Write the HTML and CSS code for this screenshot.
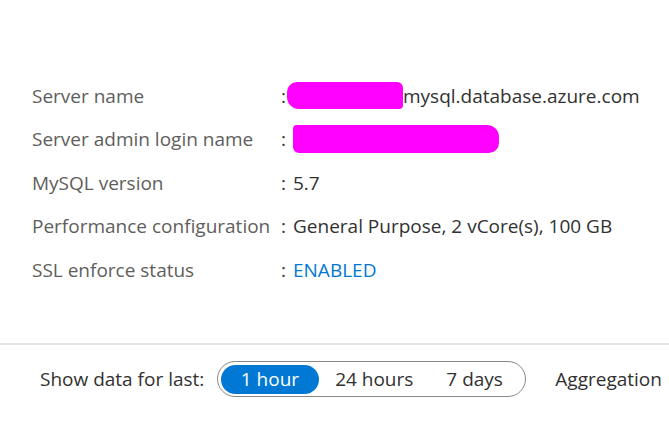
FILE: index.html
```html
<!DOCTYPE html>
<html>
<head>
<meta charset="utf-8">
<link rel="stylesheet" href="styles.css">
</head>
<body>
<div class="props">
  <div class="row"><span class="label">Server name</span><span class="colon">:</span><span class="value"><span class="redact r1"></span>mysql.database.azure.com</span></div>
  <div class="row"><span class="label">Server admin login name</span><span class="colon">:</span><span class="value"><span class="redact r2"></span></span></div>
  <div class="row"><span class="label">MySQL version</span><span class="colon">:</span><span class="value">5.7</span></div>
  <div class="row"><span class="label">Performance configuration</span><span class="colon">:</span><span class="value">General Purpose, 2 vCore(s), 100 GB</span></div>
  <div class="row"><span class="label">SSL enforce status</span><span class="colon">:</span><span class="value link">ENABLED</span></div>
</div>
<div class="sep"></div>
<div class="toolbar">
  <span class="tlabel">Show data for last:</span>
  <div class="pill">
    <span class="opt active">1 hour</span>
    <span class="opt">24 hours</span>
    <span class="opt">7 days</span>
  </div>
  <span class="agg">Aggregation</span>
</div>
</body>
</html>
```
FILE: styles.css
```css
html, body {
  margin: 0;
  padding: 0;
  background: #fff;
  width: 669px;
  height: 443px;
  overflow: hidden;
  font-family: "Open Sans", "Noto Sans", sans-serif;
}
.props {
  padding: 74px 0 0 32px;
  height: 194px;
}
.row {
  display: flex;
  align-items: center;
  height: 43.5px;
  font-size: 19px;
  white-space: nowrap;
}
.label {
  width: 249px;
  color: #605e5c;
}
.colon {
  width: 12px;
  color: #323130;
}
.value {
  color: #323130;
  display: flex;
  align-items: center;
}
.link {
  color: #0078d4;
}
.redact {
  display: inline-block;
  background: #ff00ff;
}
.r1 {
  width: 116px;
  height: 27px;
  margin-left: -6px;
  border-radius: 10px 6px 4px 12px;
}
.r2 {
  width: 206px;
  height: 28px;
  border-radius: 4px 12px 10px 6px;
}
.sep {
  height: 2px;
  background: #e6e6e6;
  margin-top: 75px;
}
.toolbar {
  display: flex;
  align-items: center;
  padding: 16px 0 0 40px;
  white-space: nowrap;
  font-size: 19px;
  color: #323130;
}
.tlabel {
  margin-right: 13px;
}
.pill {
  display: flex;
  align-items: center;
  box-sizing: border-box;
  border: 1.5px solid #8a8886;
  border-radius: 18px;
  padding: 0 2.5px;
  height: 36px;
  width: 309px;
}
.opt {
  padding: 0 17px 0 16px;
  height: 29px;
  line-height: 29px;
  border-radius: 15px;
}
.opt.active {
  background: #0078d4;
  color: #fff;
  padding: 0 20px;
}
.agg {
  margin-left: 29px;
}
```
